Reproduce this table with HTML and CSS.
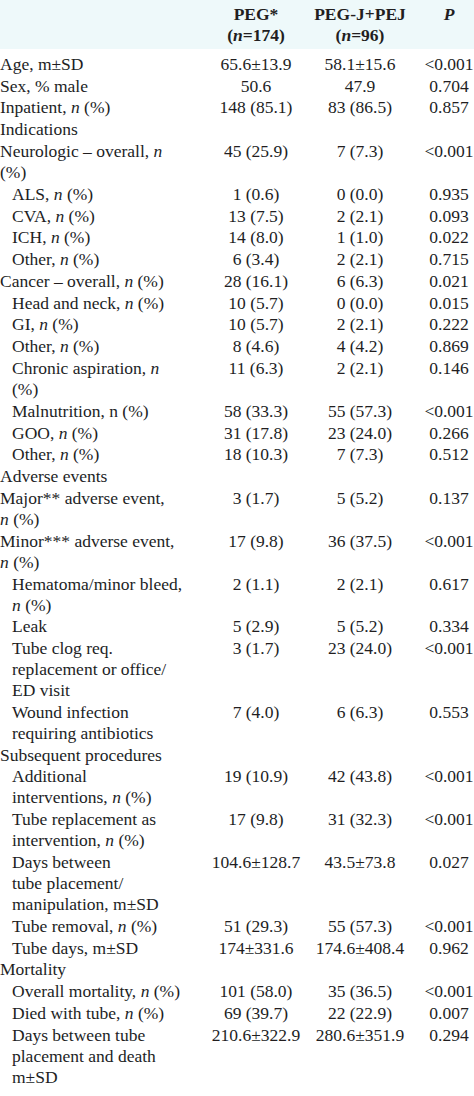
FILE: index.html
```html
<!DOCTYPE html>
<html lang="en">
<head>
<meta charset="utf-8">
<title>Table</title>
<link rel="stylesheet" href="styles.css">
</head>
<body>
<table class="data">
  <colgroup>
    <col class="c-label">
    <col class="c-a">
    <col class="c-b">
    <col class="c-p">
  </colgroup>
  <thead>
    <tr>
      <th class="label"></th>
      <th>PEG*<br>(<i>n</i>=174)</th>
      <th>PEG-J+PEJ<br>(<i>n</i>=96)</th>
      <th class="p"><i>P</i></th>
    </tr>
  </thead>
  <tbody>
    <tr><td class="label">Age, m±SD</td><td>65.6±13.9</td><td>58.1±15.6</td><td class="p">&lt;0.001</td></tr>
    <tr><td class="label">Sex, % male</td><td>50.6</td><td>47.9</td><td class="p">0.704</td></tr>
    <tr><td class="label">Inpatient, <i>n</i> (%)</td><td>148 (85.1)</td><td>83 (86.5)</td><td class="p">0.857</td></tr>
    <tr><td class="label">Indications</td><td></td><td></td><td class="p"></td></tr>
    <tr><td class="label">Neurologic – overall, <i>n</i><br>(%)</td><td>45 (25.9)</td><td>7 (7.3)</td><td class="p">&lt;0.001</td></tr>
    <tr><td class="label sub">ALS, <i>n</i> (%)</td><td>1 (0.6)</td><td>0 (0.0)</td><td class="p">0.935</td></tr>
    <tr><td class="label sub">CVA, <i>n</i> (%)</td><td>13 (7.5)</td><td>2 (2.1)</td><td class="p">0.093</td></tr>
    <tr><td class="label sub">ICH, <i>n</i> (%)</td><td>14 (8.0)</td><td>1 (1.0)</td><td class="p">0.022</td></tr>
    <tr><td class="label sub">Other, <i>n</i> (%)</td><td>6 (3.4)</td><td>2 (2.1)</td><td class="p">0.715</td></tr>
    <tr><td class="label">Cancer – overall, <i>n</i> (%)</td><td>28 (16.1)</td><td>6 (6.3)</td><td class="p">0.021</td></tr>
    <tr><td class="label sub">Head and neck, <i>n</i> (%)</td><td>10 (5.7)</td><td>0 (0.0)</td><td class="p">0.015</td></tr>
    <tr><td class="label sub">GI, <i>n</i> (%)</td><td>10 (5.7)</td><td>2 (2.1)</td><td class="p">0.222</td></tr>
    <tr><td class="label sub">Other, <i>n</i> (%)</td><td>8 (4.6)</td><td>4 (4.2)</td><td class="p">0.869</td></tr>
    <tr><td class="label sub">Chronic aspiration, <i>n</i><br>(%)</td><td>11 (6.3)</td><td>2 (2.1)</td><td class="p">0.146</td></tr>
    <tr><td class="label sub">Malnutrition, n (%)</td><td>58 (33.3)</td><td>55 (57.3)</td><td class="p">&lt;0.001</td></tr>
    <tr><td class="label sub">GOO, <i>n</i> (%)</td><td>31 (17.8)</td><td>23 (24.0)</td><td class="p">0.266</td></tr>
    <tr><td class="label sub">Other, <i>n</i> (%)</td><td>18 (10.3)</td><td>7 (7.3)</td><td class="p">0.512</td></tr>
    <tr><td class="label">Adverse events</td><td></td><td></td><td class="p"></td></tr>
    <tr><td class="label">Major** adverse event,<br><i>n</i> (%)</td><td>3 (1.7)</td><td>5 (5.2)</td><td class="p">0.137</td></tr>
    <tr><td class="label">Minor*** adverse event,<br><i>n</i> (%)</td><td>17 (9.8)</td><td>36 (37.5)</td><td class="p">&lt;0.001</td></tr>
    <tr><td class="label sub">Hematoma/minor bleed,<br><i>n</i> (%)</td><td>2 (1.1)</td><td>2 (2.1)</td><td class="p">0.617</td></tr>
    <tr><td class="label sub">Leak</td><td>5 (2.9)</td><td>5 (5.2)</td><td class="p">0.334</td></tr>
    <tr><td class="label sub">Tube clog req.<br>replacement or office/<br>ED visit</td><td>3 (1.7)</td><td>23 (24.0)</td><td class="p">&lt;0.001</td></tr>
    <tr><td class="label sub">Wound infection<br>requiring antibiotics</td><td>7 (4.0)</td><td>6 (6.3)</td><td class="p">0.553</td></tr>
    <tr><td class="label">Subsequent procedures</td><td></td><td></td><td class="p"></td></tr>
    <tr><td class="label sub">Additional<br>interventions, <i>n</i> (%)</td><td>19 (10.9)</td><td>42 (43.8)</td><td class="p">&lt;0.001</td></tr>
    <tr><td class="label sub">Tube replacement as<br>intervention, <i>n</i> (%)</td><td>17 (9.8)</td><td>31 (32.3)</td><td class="p">&lt;0.001</td></tr>
    <tr><td class="label sub">Days between<br>tube placement/<br>manipulation, m±SD</td><td>104.6±128.7</td><td>43.5±73.8</td><td class="p">0.027</td></tr>
    <tr><td class="label sub">Tube removal, <i>n</i> (%)</td><td>51 (29.3)</td><td>55 (57.3)</td><td class="p">&lt;0.001</td></tr>
    <tr><td class="label sub">Tube days, m±SD</td><td>174±331.6</td><td>174.6±408.4</td><td class="p">0.962</td></tr>
    <tr><td class="label">Mortality</td><td></td><td></td><td class="p"></td></tr>
    <tr><td class="label sub">Overall mortality, <i>n</i> (%)</td><td>101 (58.0)</td><td>35 (36.5)</td><td class="p">&lt;0.001</td></tr>
    <tr><td class="label sub">Died with tube, <i>n</i> (%)</td><td>69 (39.7)</td><td>22 (22.9)</td><td class="p">0.007</td></tr>
    <tr><td class="label sub">Days between tube<br>placement and death<br>m±SD</td><td>210.6±322.9</td><td>280.6±351.9</td><td class="p">0.294</td></tr>
  </tbody>
</table>
</body>
</html>
```

FILE: styles.css
```css
html, body {
  margin: 0;
  padding: 0;
  background: #ffffff;
}

body {
  width: 474px;
  overflow: hidden;
  font-family: "Liberation Serif", "DejaVu Serif", serif;
  font-size: 17.5px;
  line-height: 21px;
  color: #221e1f;
}

.data {
  width: 474px;
  table-layout: fixed;
  border-collapse: collapse;
  border-spacing: 0;
}

.c-label { width: 208px; }
.c-a { width: 96px; }
.c-b { width: 112px; }
.c-p { width: 58px; }

.data th,
.data td {
  padding: 0.4px 0;
  text-align: center;
  vertical-align: top;
  white-space: nowrap;
}

.data thead th {
  background: #eef9fa;
  font-weight: bold;
  padding: 4.3px 0 3px;
}

.data tbody tr:first-child td {
  padding-top: 4.6px;
}

.data .label {
  text-align: left;
}

.data .label.sub {
  padding-left: 12px;
}

.data .p {
  padding-left: 8px;
}
```
